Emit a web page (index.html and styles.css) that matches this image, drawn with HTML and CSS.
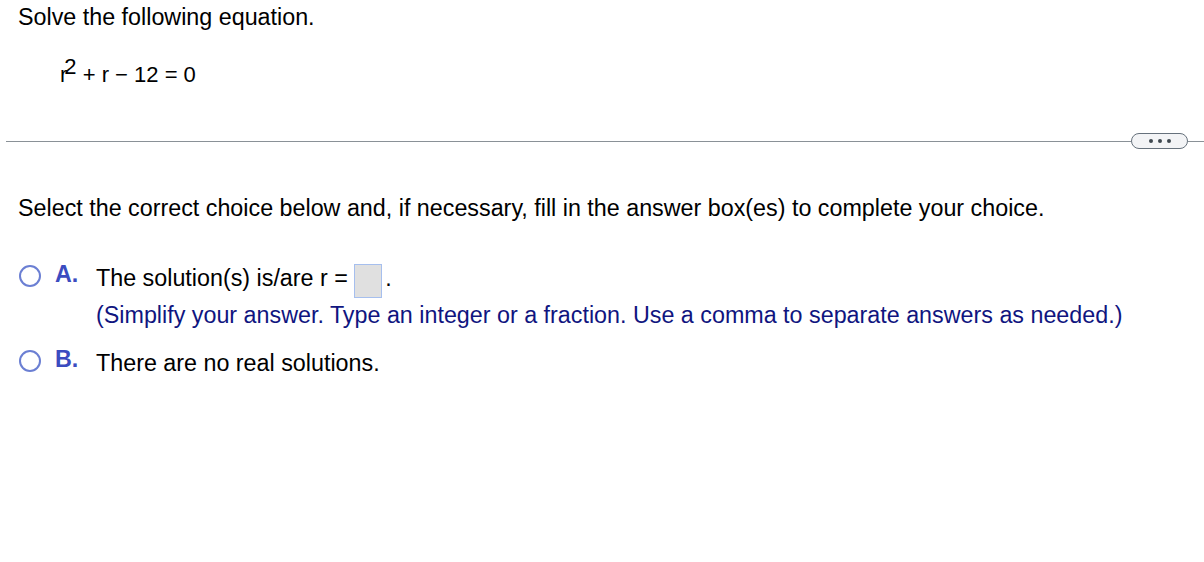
FILE: index.html
```html
<!DOCTYPE html>
<html lang="en">
<head>
    <meta charset="UTF-8">
    <title>Solve the following equation</title>
    <link rel="stylesheet" href="styles.css">
</head>
<body>
    <div class="question">
        <p class="prompt">Solve the following equation.</p>
        <p class="equation">r<sup>2</sup> + r − 12 = 0</p>
    </div>

    <div class="divider">
        <span class="rule"></span>
        <button class="more" type="button"><span></span><span></span><span></span></button>
        <span class="rule tail"></span>
    </div>

    <div class="answer">
        <p class="instructions">Select the correct choice below and, if necessary, fill in the answer box(es) to complete your choice.</p>

        <div class="choice">
            <span class="radio"></span>
            <span class="letter">A.</span>
            <div class="choice-body">
                <div class="line">The solution(s) is/are r = <span class="box"></span>.</div>
                <div class="hint">(Simplify your answer. Type an integer or a fraction. Use a comma to separate answers as needed.)</div>
            </div>
        </div>

        <div class="choice second">
            <span class="radio"></span>
            <span class="letter">B.</span>
            <div class="choice-body">
                <div class="line">There are no real solutions.</div>
            </div>
        </div>
    </div>
</body>
</html>
```

FILE: styles.css
```css
html, body {
    margin: 0;
    padding: 0;
    background-color: white;
}

body {
    font-family: "Liberation Sans", Arial, sans-serif;
    font-size: 23.3px;
    color: black;
}

p {
    margin: 0;
}

.question {
    padding: 4px 0 0 18px;
}

.prompt {
    line-height: 26px;
}

.equation {
    margin: 33px 0 0 42px;
    font-size: 22px;
    line-height: 24px;
}

.equation sup {
    font-size: 22px;
    vertical-align: 0;
    position: relative;
    top: -8px;
    margin-left: -3px;
}

.divider {
    display: flex;
    align-items: center;
    margin: 46px 0 0 6px;
}

.rule {
    flex: 1;
    height: 1px;
    background-color: #8a9197;
}

.rule.tail {
    flex: 0 0 16px;
}

.more {
    width: 57px;
    height: 16px;
    border: 1px solid #66717c;
    border-radius: 8px;
    background-color: #f3f4f6;
    display: flex;
    align-items: center;
    justify-content: center;
    gap: 5px;
    padding: 0;
}

.more span {
    width: 4px;
    height: 4px;
    border-radius: 50%;
    background-color: #3f4850;
}

.answer {
    padding: 46px 0 0 18px;
}

.instructions {
    line-height: 26px;
}

.choice {
    display: flex;
    align-items: flex-start;
    margin-top: 44px;
}

.choice.second {
    margin-top: 22px;
}

.radio {
    width: 18px;
    height: 18px;
    border: 2px solid #6b7fd3;
    border-radius: 50%;
    margin: 0 0 0 1px;
    flex: none;
}

.letter {
    color: #3b4cc0;
    font-weight: bold;
    width: 41px;
    margin-left: 14px;
    line-height: 26px;
    position: relative;
    top: -4px;
}

.line {
    line-height: 26px;
}

.box {
    display: inline-block;
    width: 26px;
    height: 32px;
    background-color: #e0e0e0;
    border: 1px solid #a6bfee;
    vertical-align: top;
    margin: -1px 3px -9px 0;
}

.hint {
    color: #10157f;
    margin-top: 11px;
    line-height: 26px;
}
```
